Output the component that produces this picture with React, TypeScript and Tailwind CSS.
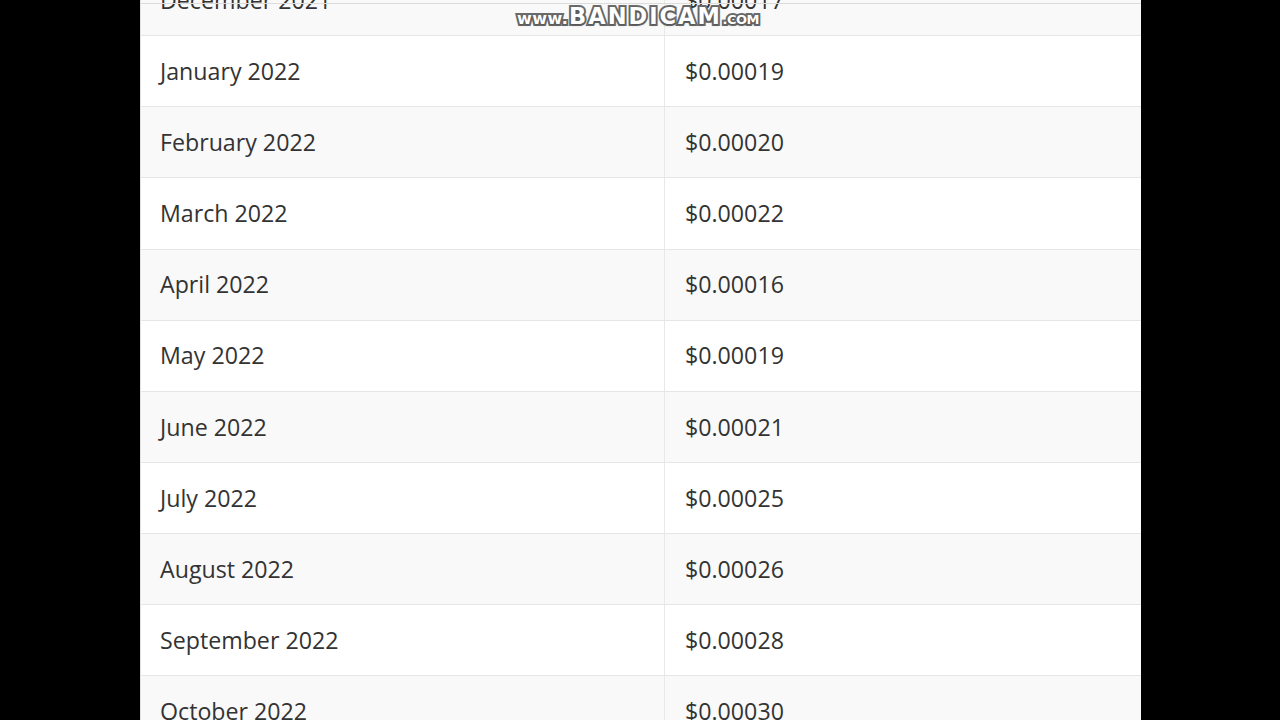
import React from "react";

const rows: [string, string][] = [
  ["December 2021", "$0.00017"],
  ["January 2022", "$0.00019"],
  ["February 2022", "$0.00020"],
  ["March 2022", "$0.00022"],
  ["April 2022", "$0.00016"],
  ["May 2022", "$0.00019"],
  ["June 2022", "$0.00021"],
  ["July 2022", "$0.00025"],
  ["August 2022", "$0.00026"],
  ["September 2022", "$0.00028"],
  ["October 2022", "$0.00030"],
];

export default function App() {
  return (
    <div className="relative w-[1280px] h-[720px] overflow-hidden bg-black flex">
      <div className="ml-[140px] w-[1001px] h-full bg-white border-l border-[#e2e2e2] overflow-hidden">
        <div className="mt-[-35px] flex flex-col">
          {rows.map(([m, p], i) => (
            <div
              key={m}
              className={`flex h-[71.15px] shrink-0 border-b border-[#e6e6e6] ${
                i % 2 === 0 ? "bg-[#f9f9f9]" : "bg-white"
              }`}
            >
              <div className="w-[524px] border-r border-[#e8e8e8] flex items-center pl-[19px] text-[23.2px] text-[#333333] [font-family:'Open_Sans',sans-serif]">
                {m}
              </div>
              <div className="flex-1 flex items-center pl-[20px] text-[23.2px] text-[#333333] [font-family:'Open_Sans',sans-serif]">
                {p}
              </div>
            </div>
          ))}
        </div>
      </div>
      <div className="absolute left-[141px] top-[3px] w-[1000px] h-px bg-[#dcdcdc]" />
      <div className="absolute left-[517px] top-[5px] w-[242px] flex justify-between items-baseline [font-family:'DejaVu_Sans',sans-serif] font-bold text-white [paint-order:stroke_fill] [-webkit-text-stroke:4px_#6c6c6c] [text-shadow:0_1px_3px_rgba(0,0,0,0.3)] leading-none">
        <span className="text-[16px] tracking-[0.5px]">www.</span>
        <span className="text-[22.5px] tracking-[2px]">BANDICAM</span>
        <span className="text-[13px] tracking-[-0.5px]">.COM</span>
      </div>
    </div>
  );
}
